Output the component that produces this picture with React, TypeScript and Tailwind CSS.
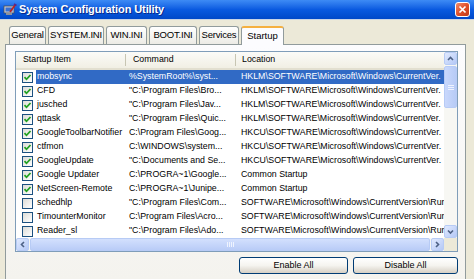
import React from "react";

type Row = { on: boolean; name: string; cmd: string; loc: string };

const HKLM = "HKLM\\SOFTWARE\\Microsoft\\Windows\\CurrentVer.";
const HKCU = "HKCU\\SOFTWARE\\Microsoft\\Windows\\CurrentVer.";
const RUN = "SOFTWARE\\Microsoft\\Windows\\CurrentVersion\\Run";

const rows: Row[] = [
  { on: true, name: "mobsync", cmd: "%SystemRoot%\\syst...", loc: HKLM },
  { on: true, name: "CFD", cmd: '"C:\\Program Files\\Bro...', loc: HKLM },
  { on: true, name: "jusched", cmd: '"C:\\Program Files\\Jav...', loc: HKLM },
  { on: true, name: "qttask", cmd: '"C:\\Program Files\\Quic...', loc: HKLM },
  { on: true, name: "GoogleToolbarNotifier", cmd: "C:\\Program Files\\Goog...", loc: HKCU },
  { on: true, name: "ctfmon", cmd: "C:\\WINDOWS\\system...", loc: HKCU },
  { on: true, name: "GoogleUpdate", cmd: '"C:\\Documents and Se...', loc: HKCU },
  { on: true, name: "Google Updater", cmd: "C:\\PROGRA~1\\Google...", loc: "Common Startup" },
  { on: true, name: "NetScreen-Remote", cmd: "C:\\PROGRA~1\\Junipe...", loc: "Common Startup" },
  { on: false, name: "schedhlp", cmd: '"C:\\Program Files\\Com...', loc: RUN },
  { on: false, name: "TimounterMonitor", cmd: "C:\\Program Files\\Acro...", loc: RUN },
  { on: false, name: "Reader_sl", cmd: '"C:\\Program Files\\Ado...', loc: RUN },
];

const tabs = [
  { label: "General", w: "w-[37px]" },
  { label: "SYSTEM.INI", w: "w-[56px]" },
  { label: "WIN.INI", w: "w-[41px]" },
  { label: "BOOT.INI", w: "w-[48px]" },
  { label: "Services", w: "w-[40px]" },
];

function Check({ on }: { on: boolean }) {
  return (
    <div className="w-[11px] h-[11px] border border-[#1c5180] bg-gradient-to-br from-[#dcdcd7] to-white flex items-center justify-center shrink-0">
      {on && (
        <svg width="9" height="9" viewBox="0 0 9 9">
          <path d="M1.5 4.2 L3.5 6.3 L7.5 2" fill="none" stroke="#21a121" strokeWidth="1.8" />
        </svg>
      )}
    </div>
  );
}

function Arrow({ dir }: { dir: "up" | "down" | "left" | "right" }) {
  const d = {
    up: "M2 6 L4.5 3.5 L7 6",
    down: "M2 3.5 L4.5 6 L7 3.5",
    left: "M6 2 L3.5 4.5 L6 7",
    right: "M3 2 L5.5 4.5 L3 7",
  }[dir];
  return (
    <div className="w-[13px] h-[13px] rounded-[2px] border border-[#b7cbf5] bg-gradient-to-br from-[#e1eafe] to-[#b4c8f6] flex items-center justify-center shrink-0">
      <svg width="9" height="9" viewBox="0 0 9 9">
        <path d={d} fill="none" stroke="#4d6185" strokeWidth="1.6" />
      </svg>
    </div>
  );
}

function XpButton({ label, w }: { label: string; w: string }) {
  return (
    <button
      className={`${w} h-[17px] rounded-[3px] border border-[#003c74] bg-gradient-to-b from-white via-[#f5f4ef] to-[#d6d0c5] text-[9px] text-black flex items-center justify-center`}
    >
      {label}
    </button>
  );
}

export default function App() {
  return (
    <div
      className="w-[474px] h-[279px] overflow-hidden bg-[#ece9d8] flex flex-col text-black"
      style={{ fontFamily: '"Liberation Sans", Arial, sans-serif' }}
    >
      {/* title bar */}
      <div className="h-[20px] shrink-0 flex items-center bg-gradient-to-b from-[#3d8bf5] via-[#0a5ae0] to-[#0048c8] border-b border-[#c9d4e6] pl-[3px] pr-[4px]">
        <svg width="14" height="13" viewBox="0 0 14 13">
          <rect x="1" y="3" width="10" height="7" fill="#c8ccd4" stroke="#4a4f5a" strokeWidth="0.8" />
          <rect x="2.5" y="4.5" width="7" height="4" fill="#3a6fd0" />
          <rect x="3" y="10" width="6" height="2" fill="#8c919c" />
          <path d="M7 9 L12.5 1.5" stroke="#c02020" strokeWidth="1.6" />
          <path d="M11 1 L13.5 2.5" stroke="#5a2a8a" strokeWidth="1.8" />
        </svg>
        <span className="ml-[2px] text-white font-bold text-[11px] leading-none tracking-[-0.1px] [text-shadow:1px_1px_0_#0a2a8a]">
          System Configuration Utility
        </span>
        <div className="ml-auto w-[15px] h-[15px] rounded-[3px] border border-white bg-gradient-to-br from-[#f08a6a] via-[#e0502a] to-[#c03a18] flex items-center justify-center">
          <svg width="9" height="9" viewBox="0 0 9 9">
            <path d="M1.5 1.5 L7.5 7.5 M7.5 1.5 L1.5 7.5" stroke="white" strokeWidth="1.7" />
          </svg>
        </div>
      </div>

      {/* tab strip */}
      <div className="flex items-end pl-[9px] pt-[6px] gap-[2px] relative z-10">
        {tabs.map((t) => (
          <div
            key={t.label}
            className={`${t.w} h-[18px] border border-b-0 border-[#919b9c] rounded-t-[3px] bg-gradient-to-b from-white to-[#ecebe5] text-[9.5px] tracking-[-0.2px] whitespace-nowrap flex items-center justify-center`}
          >
            {t.label}
          </div>
        ))}
        <div className="w-[43px] h-[19px] -mb-px border border-b-0 border-[#919b9c] border-t-2 border-t-[#f5b040] rounded-t-[3px] bg-[#fcfcfe] text-[9.5px] flex items-center justify-center">
          Startup
        </div>
      </div>

      {/* panel */}
      <div className="ml-[5px] w-[461px] flex-1 border border-[#919b9c] border-b-0 bg-gradient-to-b from-[#fcfcfe] to-[#f4f3ee] pl-[9px] pt-[6px]">
        {/* list view */}
        <div className="w-[443px] h-[201px] border border-[#7f9db9] bg-white flex flex-col text-[8.8px]">
          <div className="flex h-[186px]">
            <div className="w-[428px] overflow-hidden">
              {/* header */}
              <div className="h-[18px] flex items-center bg-gradient-to-b from-[#fbfbf8] to-[#f1efe4] border-b-2 border-[#e2dfd0]">
                <div className="w-[110px] pl-[7px] border-r border-[#c7c5b2] h-[12px] flex items-center">Startup Item</div>
                <div className="w-[110px] pl-[7px] border-r border-[#c7c5b2] h-[12px] flex items-center">Command</div>
                <div className="flex-1 pl-[6px] h-[12px] flex items-center">Location</div>
              </div>
              {rows.map((r, i) => {
                const sel = i === 0;
                return (
                  <div key={r.name} className="h-[14px] flex items-center whitespace-nowrap">
                    <div className="w-[20px] pl-[6px] shrink-0">
                      <Check on={r.on} />
                    </div>
                    <div
                      className={`flex-1 flex items-center h-full ${sel ? "bg-[#316ac5] text-white" : ""}`}
                    >
                      <div className="w-[90px] pl-[1px] overflow-hidden">{r.name}</div>
                      <div className="w-[110px] pl-[3px] overflow-hidden">{r.cmd}</div>
                      <div className="w-[208px] pl-[5px] overflow-hidden">{r.loc}</div>
                    </div>
                  </div>
                );
              })}
            </div>
            {/* vertical scrollbar */}
            <div className="w-[13px] flex flex-col bg-[#f7f7f3]">
              <Arrow dir="up" />
              <div className="mt-[1px] h-[42px] rounded-[2px] border border-[#b7cbf5] bg-gradient-to-r from-[#c9d8fc] to-[#b7cbf6] flex flex-col items-center justify-center gap-[1px]">
                <div className="w-[6px] h-px bg-[#eef3fe]" />
                <div className="w-[6px] h-px bg-[#eef3fe]" />
                <div className="w-[6px] h-px bg-[#eef3fe]" />
              </div>
              <div className="flex-1" />
              <Arrow dir="down" />
            </div>
          </div>
          {/* horizontal scrollbar */}
          <div className="flex flex-1">
            <div className="w-[428px] flex bg-[#f7f7f3]">
              <Arrow dir="left" />
              <div className="flex-1 mx-[1px] rounded-[2px] border border-[#b7cbf5] bg-gradient-to-b from-[#d3e0fd] to-[#b9ccf7] flex items-center justify-center gap-[1px]">
                <div className="w-px h-[5px] bg-[#eef3fe]" />
                <div className="w-px h-[5px] bg-[#eef3fe]" />
                <div className="w-px h-[5px] bg-[#eef3fe]" />
                <div className="w-px h-[5px] bg-[#eef3fe]" />
              </div>
              <Arrow dir="right" />
            </div>
            <div className="w-[13px] bg-[#ece9d8]" />
          </div>
        </div>

        {/* buttons */}
        <div className="w-[443px] flex justify-end gap-[5px] mt-[5px]">
          <XpButton label="Enable All" w="w-[109px]" />
          <XpButton label="Disable All" w="w-[105px]" />
        </div>
      </div>
    </div>
  );
}
